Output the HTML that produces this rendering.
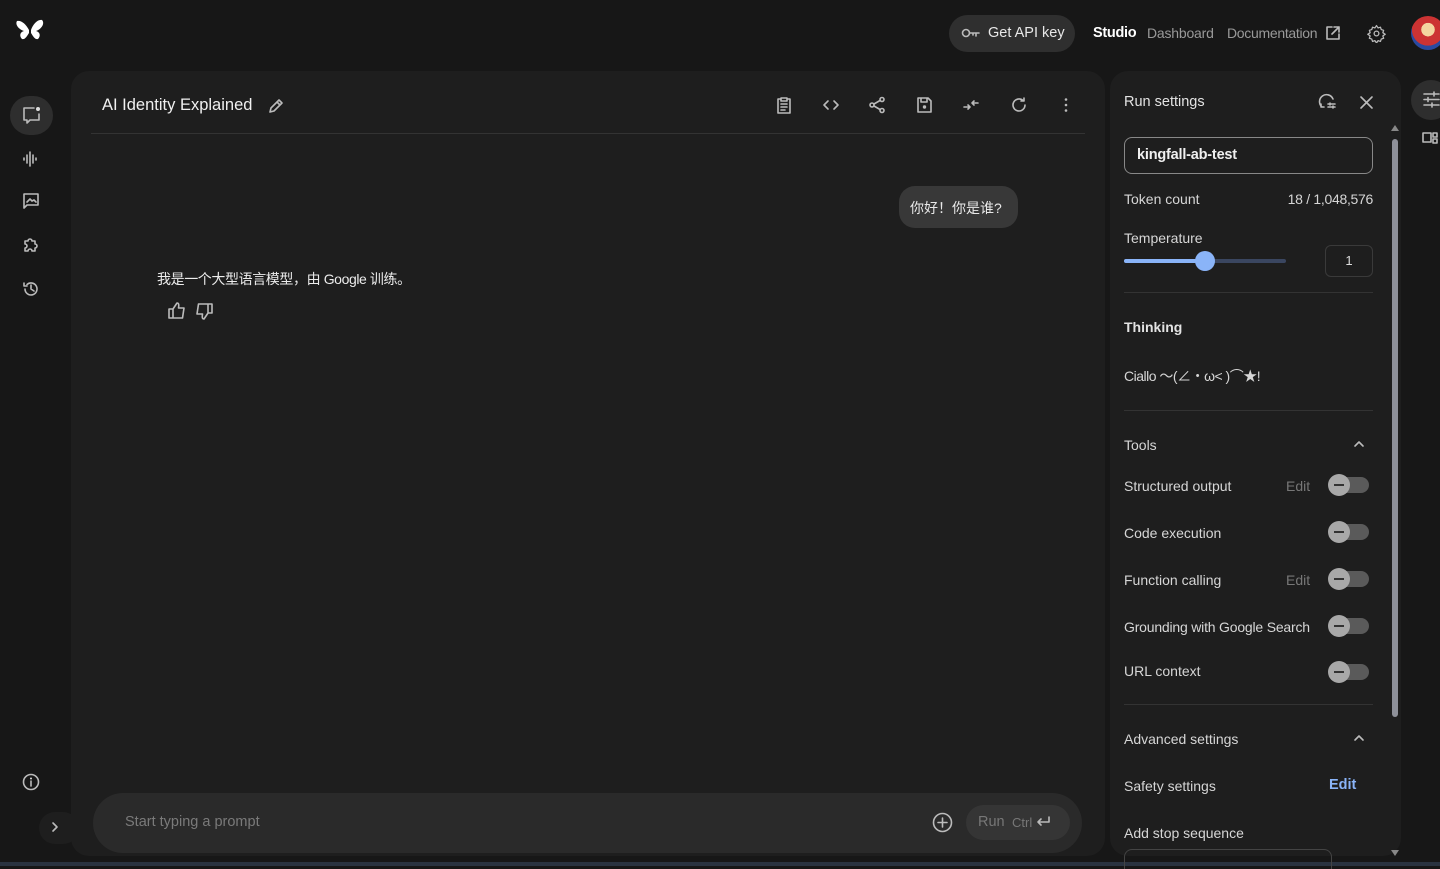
<!DOCTYPE html>
<html><head><meta charset="utf-8">
<style>
*{box-sizing:border-box;margin:0;padding:0}
body{width:1440px;height:866px;overflow:hidden;background:#171717;font-family:"Liberation Sans","Noto Sans CJK SC",sans-serif;color:#e3e3e3;position:relative}
.abs{position:absolute}
svg{display:block}
.ic{stroke:#bbb;fill:none;stroke-width:1.6;stroke-linecap:round;stroke-linejoin:round}
.main{left:71px;top:71px;width:1034px;height:785px;background:#1e1e1e;border-radius:18px}
.side{left:1110px;top:71px;width:291px;height:785px;background:#1e1e1e;border-radius:18px}
.lbl{font-size:14px;color:#d6d6d6;position:absolute;white-space:nowrap}
.tog{position:absolute;width:40px;height:16px;border-radius:8px;background:#5a5a5a}
.tog::before{content:"";position:absolute;left:-1px;top:-3px;width:22px;height:22px;border-radius:50%;background:#a8a8a8}
.tog::after{content:"";position:absolute;left:5px;top:7px;width:10px;height:2px;background:#333}
.edit{position:absolute;font-size:14px;color:#777}
.hr{position:absolute;left:1124px;width:249px;height:1px;background:#333}
</style></head><body>
<div class="abs" style="left:0;top:862px;width:1440px;height:4px;background:#2a3340"></div>

<svg class="abs" style="left:15px;top:18px" width="30" height="26" viewBox="0 0 30 26"><path fill="#fff" d="M14 12C11 6 6 2 2 3 0 6 3 11 9 13 5 14 4 18 7 21 10 22 12 18 14 15Z M16 12C18 6 23 1 27 2 30 5 27 11 21 13 25 14 26 18 23 21 20 22 18 18 16 15Z"/></svg>

<div class="abs" style="left:949px;top:15px;width:126px;height:37px;border-radius:19px;background:#2f2f2f"></div>
<svg class="abs" style="left:961px;top:27px" width="20" height="12" viewBox="0 0 20 12"><circle cx="5" cy="6" r="3.5" class="ic" stroke="#ddd"/><path d="M8.5 6H18M15 6v3M12 6v2" class="ic" stroke="#ddd"/></svg>
<div class="abs" style="left:988px;top:25px;font-size:14.5px;color:#e8e8e8">Get API key</div>
<div class="abs" style="left:1093px;top:25px;font-size:14.5px;font-weight:bold;color:#fff;letter-spacing:-0.3px">Studio</div>
<div class="abs" style="left:1147px;top:25px;font-size:14px;color:#999;letter-spacing:-0.2px">Dashboard</div>
<div class="abs" style="left:1227px;top:25px;font-size:14px;color:#999;letter-spacing:-0.3px">Documentation</div>
<svg class="abs" style="left:1326px;top:26px" width="14" height="14" viewBox="0 0 14 14"><path d="M6 1H1v12h12V8M8 1h5v5M13 1 6 8" class="ic" stroke="#999"/></svg>
<svg class="abs" style="left:1367px;top:24px" width="19" height="19" viewBox="0 0 24 24"><circle cx="12" cy="12" r="3" class="ic"/><path class="ic" d="M12 2l2 3 3-1 1 3 3 1-1 3 3 2-3 2 1 3-3 1-1 3-3-1-2 3-2-3-3 1-1-3-3-1 1-3-3-2 3-2-1-3 3-1 1-3 3 1z"/></svg>
<div class="abs" style="left:1411px;top:16px;width:34px;height:34px;border-radius:50%;background:radial-gradient(circle at 50% 40%,#f4d6a0 0 25%,#c33 26% 60%,#2a4aa0 61%)"></div>

<div class="abs" style="left:10px;top:96px;width:43px;height:39px;border-radius:20px;background:#2e2e2e"></div>
<svg class="abs" style="left:22px;top:106px" width="19" height="19" viewBox="0 0 19 19"><path class="ic" stroke="#ddd" d="M12 2H2v12h3v3l3-3h9V8"/><circle cx="16" cy="3" r="2" fill="#ddd"/></svg>
<svg class="abs" style="left:22px;top:150px" width="18" height="18" viewBox="0 0 18 18"><path class="ic" d="M2 8v2M5 5v8M8 2v14M11 5v8M14 8v2"/></svg>
<svg class="abs" style="left:22px;top:192px" width="18" height="18" viewBox="0 0 18 18"><path class="ic" d="M2 2h14v11H5l-3 3z M5 10l3-3 2 2 2-1 2 2"/></svg>
<svg class="abs" style="left:22px;top:236px" width="18" height="18" viewBox="0 0 18 18"><path class="ic" d="M3 5h3a2 2 0 1 1 4 0h3v3a2 2 0 1 1 0 4v3H10a2 2 0 1 0-4 0H3v-3a2 2 0 1 0 0-4z"/></svg>
<svg class="abs" style="left:22px;top:280px" width="18" height="18" viewBox="0 0 18 18"><path class="ic" d="M3 9a6 6 0 1 0 2-4.5M2 3v3h3M9 5v4l3 2"/></svg>
<svg class="abs" style="left:22px;top:773px" width="18" height="18" viewBox="0 0 18 18"><circle cx="9" cy="9" r="7.5" class="ic" stroke="#ddd"/><path d="M9 8v5" class="ic" stroke="#ddd"/><circle cx="9" cy="5.5" r="1" fill="#ddd"/></svg>
<div class="abs" style="left:39px;top:812px;width:40px;height:32px;border-radius:16px;background:#1e1e1e"></div>
<svg class="abs" style="left:50px;top:821px" width="10" height="12" viewBox="0 0 10 12"><path d="M3 2l4 4-4 4" class="ic" stroke="#ddd"/></svg>

<div class="abs main"></div>
<div class="abs" style="left:102px;top:96px;font-size:16.5px;color:#f0f0f0">AI Identity Explained</div>
<svg class="abs" style="left:267px;top:97px" width="18" height="18" viewBox="0 0 18 18"><path class="ic" d="M3 15l1-4 8-8 3 3-8 8z M10 5l3 3"/></svg>
<div class="abs" style="left:91px;top:133px;width:994px;height:1px;background:#333"></div>
<svg class="abs" style="left:775px;top:96px" width="18" height="18" viewBox="0 0 18 18"><path class="ic" d="M6 3H3v14h12V3h-3M6 2h6v3H6z M6 8h6M6 11h6M6 14h4"/></svg>
<svg class="abs" style="left:822px;top:96px" width="18" height="18" viewBox="0 0 18 18"><path class="ic" d="M6 5L2 9l4 4M12 5l4 4-4 4"/></svg>
<svg class="abs" style="left:868px;top:96px" width="18" height="18" viewBox="0 0 18 18"><circle cx="14" cy="3.5" r="2" class="ic"/><circle cx="4" cy="9" r="2" class="ic"/><circle cx="14" cy="14.5" r="2" class="ic"/><path class="ic" d="M6 8l6-3.5M6 10l6 3.5"/></svg>
<svg class="abs" style="left:915px;top:96px" width="18" height="18" viewBox="0 0 18 18"><path class="ic" d="M3 2h10l3 3v11H3z M6 2v4h6V2"/><circle cx="9.5" cy="11" r="1.7" fill="#bbb"/></svg>
<svg class="abs" style="left:962px;top:96px" width="18" height="18" viewBox="0 0 18 18"><path class="ic" d="M2 11h6M6 9l2 2-2 2M16 7h-6M12 5l-2 2 2 2"/></svg>
<svg class="abs" style="left:1010px;top:96px" width="18" height="18" viewBox="0 0 18 18"><path class="ic" d="M15 9a6 6 0 1 1-2-4.5M14 2v3h-3"/></svg>
<svg class="abs" style="left:1057px;top:96px" width="18" height="18" viewBox="0 0 18 18"><circle cx="9" cy="3.5" r="1.3" fill="#bbb"/><circle cx="9" cy="9" r="1.3" fill="#bbb"/><circle cx="9" cy="14.5" r="1.3" fill="#bbb"/></svg>

<div class="abs" style="left:899px;top:186px;width:119px;height:42px;border-radius:16px;background:#383838"></div>
<div class="abs" style="left:910px;top:198px;font-size:14px;color:#e8e8e8">你好！你是谁?</div>
<div class="abs" style="left:157px;top:269px;font-size:14px;color:#ececec;letter-spacing:-0.4px">我是一个大型语言模型，由 Google 训练。</div>
<svg class="abs" style="left:167px;top:301px" width="20" height="19" viewBox="0 0 20 19"><path class="ic" d="M2 8h4v9H2z M6 8l4-6c2 0 2 2 1.5 5H17l-1.5 10H6"/></svg>
<svg class="abs" style="left:194px;top:302px" width="20" height="19" viewBox="0 0 20 19"><path class="ic" d="M14 2h4v9h-4z M14 11l-4 6c-2 0-2-2-1.5-5H3l1.5-10H14"/></svg>

<div class="abs" style="left:93px;top:793px;width:989px;height:60px;border-radius:30px;background:#2a2a2a"></div>
<div class="abs" style="left:125px;top:814px;font-size:14.5px;color:#7a7a7a">Start typing a prompt</div>
<svg class="abs" style="left:932px;top:812px" width="21" height="21" viewBox="0 0 21 21"><circle cx="10.5" cy="10.5" r="9" class="ic" stroke="#ccc"/><path d="M10.5 6v9M6 10.5h9" class="ic" stroke="#ccc"/></svg>
<div class="abs" style="left:966px;top:805px;width:104px;height:35px;border-radius:18px;background:#353535"></div>
<div class="abs" style="left:978px;top:814px;font-size:14.5px;color:#777">Run</div>
<div class="abs" style="left:1012px;top:815px;font-size:13px;color:#777">Ctrl</div>
<svg class="abs" style="left:1035px;top:815px" width="16" height="14" viewBox="0 0 16 14"><path d="M14 2v5H3M6 4L3 7l3 3" class="ic" stroke="#777" stroke-width="1.8"/></svg>

<div class="abs side"></div>
<div class="abs" style="left:1124px;top:94px;font-size:14.5px;color:#e3e3e3">Run settings</div>
<svg class="abs" style="left:1318px;top:93px" width="19" height="18" viewBox="0 0 19 18"><path class="ic" d="M4 14A7 7 0 1 1 15 6M3 11v3h3M10 11h7M10 14h7M12 10v2M15 13v2"/></svg>
<svg class="abs" style="left:1359px;top:95px" width="15" height="15" viewBox="0 0 15 15"><path class="ic" stroke="#ddd" d="M2 2l11 11M13 2L2 13"/></svg>
<div class="abs" style="left:1124px;top:137px;width:249px;height:37px;border-radius:8px;border:1px solid #888"></div>
<div class="abs" style="left:1137px;top:147px;font-size:14.5px;font-weight:bold;color:#f0f0f0;letter-spacing:-0.2px">kingfall-ab-test</div>
<div class="lbl" style="left:1124px;top:191px">Token count</div>
<div class="lbl" style="right:67px;top:191px;letter-spacing:-0.3px">18 / 1,048,576</div>
<div class="lbl" style="left:1124px;top:230px">Temperature</div>
<div class="abs" style="left:1124px;top:259px;width:162px;height:4px;border-radius:2px;background:#3a4660"></div>
<div class="abs" style="left:1124px;top:259px;width:80px;height:4px;border-radius:2px;background:#8ab4f8"></div>
<div class="abs" style="left:1195px;top:251px;width:20px;height:20px;border-radius:50%;background:#8ab4f8"></div>
<div class="abs" style="left:1325px;top:245px;width:48px;height:32px;border-radius:6px;border:1px solid #3a3a3a;font-size:13px;text-align:center;line-height:30px;color:#ddd">1</div>
<div class="hr" style="top:292px"></div>
<div class="lbl" style="left:1124px;top:319px;color:#e3e3e3;font-weight:bold">Thinking</div>
<div class="lbl" style="left:1124px;top:366px;letter-spacing:-0.5px">Ciallo ～(∠・ω&lt; )⌒★!</div>
<div class="hr" style="top:410px"></div>
<div class="lbl" style="left:1124px;top:437px">Tools</div>
<svg class="abs" style="left:1353px;top:440px" width="12" height="8" viewBox="0 0 12 8"><path d="M2 6l4-4 4 4" class="ic"/></svg>
<div class="lbl" style="left:1124px;top:478px">Structured output</div><div class="edit" style="left:1286px;top:478px">Edit</div><div class="tog" style="left:1329px;top:477px"></div>
<div class="lbl" style="left:1124px;top:525px">Code execution</div><div class="tog" style="left:1329px;top:524px"></div>
<div class="lbl" style="left:1124px;top:572px">Function calling</div><div class="edit" style="left:1286px;top:572px">Edit</div><div class="tog" style="left:1329px;top:571px"></div>
<div class="lbl" style="left:1124px;top:619px;letter-spacing:-0.2px">Grounding with Google Search</div><div class="tog" style="left:1329px;top:618px"></div>
<div class="lbl" style="left:1124px;top:663px">URL context</div><div class="tog" style="left:1329px;top:664px"></div>
<div class="hr" style="top:704px"></div>
<div class="lbl" style="left:1124px;top:731px">Advanced settings</div>
<svg class="abs" style="left:1353px;top:734px" width="12" height="8" viewBox="0 0 12 8"><path d="M2 6l4-4 4 4" class="ic"/></svg>
<div class="lbl" style="left:1124px;top:778px">Safety settings</div>
<div class="abs" style="left:1329px;top:777px;font-size:14.5px;color:#8ab4f8;font-weight:bold">Edit</div>
<div class="lbl" style="left:1124px;top:825px">Add stop sequence</div>
<div class="abs" style="left:1124px;top:849px;width:208px;height:20px;border-radius:8px 8px 0 0;border:1px solid #444;border-bottom:none"></div>
<div class="abs" style="left:1391px;top:125px;width:0;height:0;border-left:4px solid transparent;border-right:4px solid transparent;border-bottom:6px solid #888"></div>
<div class="abs" style="left:1392px;top:139px;width:6px;height:578px;border-radius:3px;background:#8e9099"></div>
<div class="abs" style="left:1391px;top:850px;width:0;height:0;border-left:4px solid transparent;border-right:4px solid transparent;border-top:6px solid #888"></div>

<div class="abs" style="left:1411px;top:80px;width:40px;height:40px;border-radius:50%;background:#2e2e2e"></div>
<svg class="abs" style="left:1423px;top:91px" width="17" height="17" viewBox="0 0 17 17"><path class="ic" d="M1 3h15M1 8.5h15M1 14h15M11 1v4M5 6.5v4M9 12v4"/></svg>
<svg class="abs" style="left:1422px;top:131px" width="18" height="14" viewBox="0 0 18 14"><rect x="1" y="2" width="8" height="9" class="ic" stroke-width="1.4"/><rect x="11" y="2" width="4" height="4" class="ic" stroke-width="1.4"/><rect x="11" y="8" width="4" height="4" class="ic" stroke-width="1.4"/></svg>
</body></html>
